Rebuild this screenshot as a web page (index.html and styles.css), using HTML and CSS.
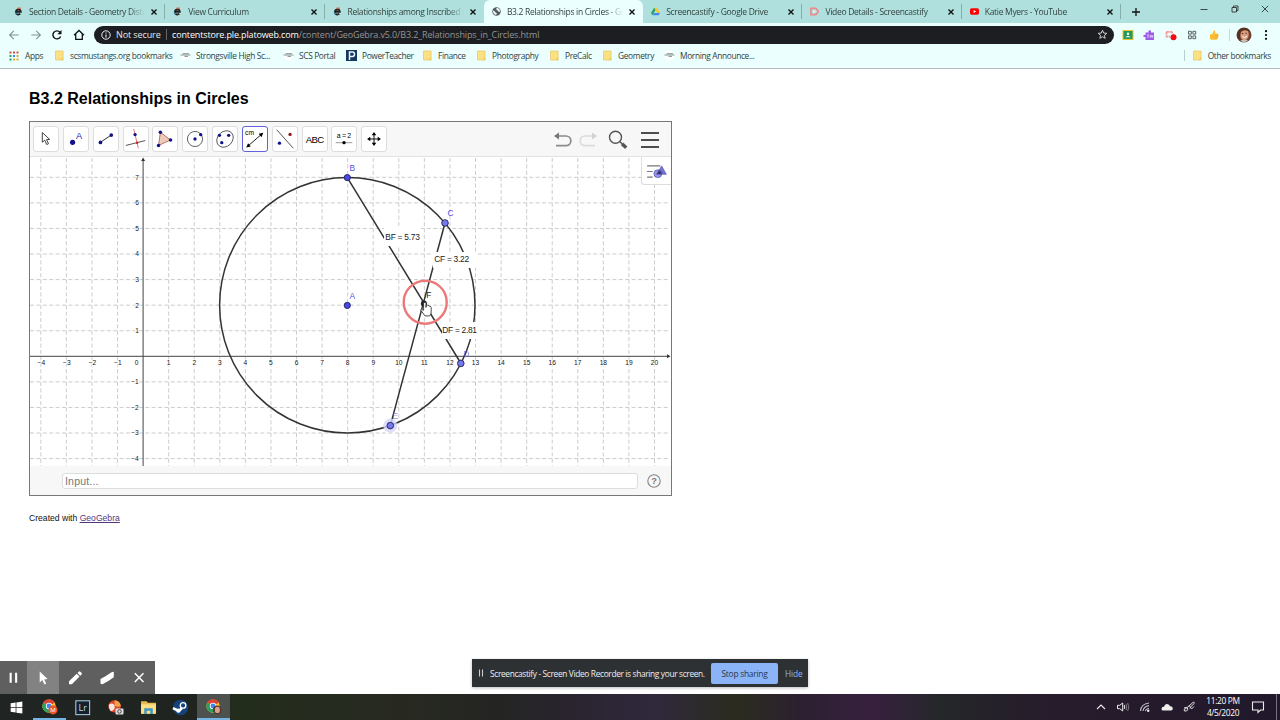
FILE: index.html
```
<!DOCTYPE html>
<html lang="en">

<head>
    <meta charset="UTF-8">
    <meta name="viewport" content="width=device-width, initial-scale=1.0">
    <title>B3.2 Relationships in Circles - GeoGebra</title>
    <link rel="stylesheet" href="styles.css">
</head>

<body>
    <svg class="defs">
        <symbol id="edmentum" viewBox="0 0 10 10">
            <path d="M2.2 5.3 H7.6 A2.8 2.8 0 1 0 6.9 7.4" fill="none" stroke="#222" stroke-width="2" />
            <path d="M4 1.4 H7.5" stroke="#e5593c" stroke-width="1.6" />
            <path d="M1 6.2 l2 1.6" stroke="#3a8fc4" stroke-width="1.4" />
        </symbol>
        <symbol id="close" viewBox="0 0 8 8">
            <path d="M1.5 1.5 L6.5 6.5 M6.5 1.5 L1.5 6.5" stroke="#111" stroke-width="1.4" />
        </symbol>
        <symbol id="folder" viewBox="0 0 10 11">
            <path d="M1 1 H8.6 V10 H1 Z" fill="#fbe184" stroke="#e5c565" stroke-width=".7" />
            <path d="M7.8 7.5 h.9 v2.7 h-2.5 z" fill="#f0cb5c" />
        </symbol>
        <symbol id="mustang" viewBox="0 0 11 11">
            <circle cx="5.5" cy="5.5" r="5" fill="#fff" />
            <path d="M.5 5 H10.5 M2.5 3.7 H9 M4.5 6.4 H8" stroke="#718a83" stroke-width=".9" />
        </symbol>
        <symbol id="chrome" viewBox="0 0 16 16">
            <circle cx="8" cy="8" r="7.5" fill="#fbc72f" />
            <path d="M8 8 L1.5 4.2 A7.5 7.5 0 0 1 14.5 4.2 Z" fill="#db4437" />
            <path d="M8 8 L1.5 4.2 A7.5 7.5 0 0 0 8 15.5 Z" fill="#2da15b" />
            <circle cx="8" cy="8" r="3.6" fill="#fff" />
            <circle cx="8" cy="8" r="2.8" fill="#4285f4" />
        </symbol>
    </svg>

    <div class="tabs">
        <div class="tab"><svg class="fav"><use href="#edmentum" /></svg><span>Section Details - Geometry Dista</span><svg class="x"><use href="#close" /></svg></div>
        <div class="tab"><svg class="fav"><use href="#edmentum" /></svg><span>View Curriculum</span><svg class="x"><use href="#close" /></svg></div>
        <div class="tab before-active"><svg class="fav"><use href="#edmentum" /></svg><span>Relationships among Inscribed A</span><svg class="x"><use href="#close" /></svg></div>
        <div class="tab active">
            <svg class="fav" viewBox="0 0 10 10">
                <circle cx="5" cy="5" r="4.7" fill="#555a5e" />
                <path d="M1 4 Q3 4 4 6 L5.5 7 L4.6 9 Q1 8 1 4 M5 1 Q4 3 6 3.6 L7 5 L9 5.5 Q9 2 6.5 1.2 Z" fill="#e9f7f6" />
            </svg>
            <span>B3.2 Relationships in Circles - Ge</span><svg class="x"><use href="#close" /></svg>
        </div>
        <div class="tab">
            <svg class="fav" viewBox="0 0 10 10">
                <path d="M3.5 .7 L6.5 .7 L10 6.6 H7 Z" fill="#fbc52d" />
                <path d="M3.5 .7 L5 3.3 L1.6 9.3 L0 6.6 Z" fill="#1ea362" />
                <path d="M3.2 6.6 H10 L8.5 9.3 H1.6 Z" fill="#4688f1" />
            </svg>
            <span>Screencastify - Google Drive</span><svg class="x"><use href="#close" /></svg>
        </div>
        <div class="tab">
            <svg class="fav" viewBox="0 0 10 10">
                <path d="M1 1.5 H6.5 L9.5 5 L6.5 8.5 H1 Z" fill="none" stroke="#ee8a8c" stroke-width="1.8" />
                <path d="M3.5 3 L6.7 5 L3.5 7 Z" fill="#ffecec" />
            </svg>
            <span>Video Details - Screencastify</span><svg class="x"><use href="#close" /></svg>
        </div>
        <div class="tab">
            <svg class="fav" viewBox="0 0 10 10">
                <rect x="0" y="1.3" width="10" height="7.2" rx="1.8" fill="#f00" />
                <path d="M4 3.2 L6.8 4.9 L4 6.6 Z" fill="#fff" />
            </svg>
            <span>Katie Myers - YouTube</span><svg class="x"><use href="#close" /></svg>
        </div>
        <svg class="new-tab" viewBox="0 0 10 10"><path d="M5 1 V9 M1 5 H9" stroke="#111" stroke-width="1.3" /></svg>
        <div class="window-buttons">
            <svg viewBox="0 0 8 8"><path d="M.5 4.5 H7.5" stroke="#222" stroke-width=".8" /></svg>
            <svg viewBox="0 0 8 8"><path d="M1 2.5 H5.5 V7 H1 Z M2.5 2.5 V1 H7 V5.5 H5.5" fill="none" stroke="#222" stroke-width=".8" /></svg>
            <svg viewBox="0 0 8 8"><path d="M.8 .8 L7.2 7.2 M7.2 .8 L.8 7.2" stroke="#222" stroke-width=".8" /></svg>
        </div>
    </div>

    <div class="address-row">
        <svg class="nav" viewBox="0 0 12 12"><path d="M10.7 6 H1.7 M5.8 1.8 L1.6 6 L5.8 10.2" fill="none" stroke="#829491" stroke-width="1.1" /></svg>
        <svg class="nav" viewBox="0 0 12 12"><path d="M1.3 6 H10.3 M6.2 1.8 L10.4 6 L6.2 10.2" fill="none" stroke="#829491" stroke-width="1.1" /></svg>
        <svg class="nav" viewBox="0 0 12 12"><path d="M9.6 7.4 A4 4 0 1 1 9 3.3" fill="none" stroke="#111" stroke-width="1.4" /><path d="M10.5 1 V5.2 H6.3 Z" fill="#111" /></svg>
        <svg class="nav" viewBox="0 0 12 12"><path d="M1 6.2 L6 1.5 L11 6.2 M2.7 5.3 V10.4 H9.3 V5.3" fill="none" stroke="#111" stroke-width="1.3" /></svg>
        <div class="address">
            <svg class="info" viewBox="0 0 10 10"><circle cx="5" cy="5" r="4.2" fill="none" stroke="#eee" /><path d="M5 4.4 V7.4 M5 2.5 V3.6" stroke="#eee" stroke-width="1.1" /></svg>
            <span class="secure">Not secure</span>
            <span class="url"><b>contentstore.ple.platoweb.com</b><i>/content/GeoGebra.v5.0/B3.2_Relationships_in_Circles.html</i></span>
            <svg class="star" viewBox="0 0 12 12"><path d="M6 1.3 L7.3 4.4 L10.7 4.7 L8.1 6.9 L8.9 10.2 L6 8.4 L3.1 10.2 L3.9 6.9 L1.3 4.7 L4.7 4.4 Z" fill="none" stroke="#ddd" /></svg>
        </div>
        <div class="extensions">
            <svg viewBox="0 0 12 12"><rect x=".5" y="1" width="11" height="10" fill="#f0bd35" /><rect x="1.5" y="2" width="9" height="8" fill="#239957" /><circle cx="6" cy="4.8" r="1.2" fill="#fff" /><path d="M3.3 8.2 Q6 5.2 8.7 8.2 Z" fill="#fff" /></svg>
            <svg viewBox="0 0 12 12"><path d="M2.5 3.5 H5.5 V1.5 H8 V3.5 H11 V11 H2.5 V8 H.5 V6 H2.5 Z" fill="#9c5ce6" /><path d="M4 6 H6 M5 6 V9 M7 6 L7.6 8.6 L8.5 6.4 L9.4 8.6 L10 6" fill="none" stroke="#e8d8ff" stroke-width=".8" /></svg>
            <svg viewBox="0 0 12 12"><path d="M1.5 2.8 H6.5 L8 5 M1.5 2.8 V7.5 H5" fill="none" stroke="#f29a9c" stroke-width="1.8" stroke-dasharray="3 .6" /><circle cx="8.5" cy="8.3" r="3" fill="#f00b17" /></svg>
            <svg viewBox="0 0 12 12"><path d="M2.5 2.3 H5.3 V5.1 H2.5 Z M6.9 2.3 H9.7 V5.1 H6.9 Z M2.5 6.9 H5.3 V9.7 H2.5 Z M6.9 6.9 H9.7 V9.7 H6.9 Z" fill="none" stroke="#47504f" stroke-width=".9" /></svg>
            <svg viewBox="0 0 12 12"><path d="M2 5.5 L4.3 5 L6 1.2 Q7.8 1 7 4.6 H9.8 Q11 5 10.3 7.5 L9.6 9.7 Q9.3 10.8 7.8 10.8 H3.4 L2 10 Z" fill="#fcbd32" /><path d="M7 6.6 H10.4 M7 8.4 H10" stroke="#e79a24" stroke-width=".5" /></svg>
        </div>
        <svg class="avatar" viewBox="0 0 16 16">
            <circle cx="8" cy="8" r="7.5" fill="#70432f" />
            <ellipse cx="8.4" cy="7.5" rx="4.3" ry="5.5" fill="#d99b7e" />
            <path d="M1 8 Q2 1 8 1 Q13 1 14 5 Q10 2 6 4 Q3.5 6 4.5 13 Q1 12 1 8" fill="#54301f" />
            <path d="M5.8 6.5 h1.5 M9.5 6.3 h1.5" stroke="#4b2a20" stroke-width=".9" />
            <path d="M6.5 9.7 Q8.8 11.6 11 9.2" fill="none" stroke="#fff" stroke-width="1" />
            <path d="M4.5 13.4 Q8 11.8 12 13.2 Q8 17 4.5 13.4" fill="#c9c0ba" />
        </svg>
        <svg class="more" viewBox="0 0 4 12"><circle cx="2" cy="2.2" r="1.1" /><circle cx="2" cy="6" r="1.1" /><circle cx="2" cy="9.8" r="1.1" /></svg>
    </div>

    <div class="bookmarks">
        <svg class="apps" viewBox="0 0 10 10">
            <path d="M.5 1.5 H2.5 M4 1.5 H6 M7.5 1.5 H9.5" stroke="#dc4a3c" stroke-width="2" />
            <path d="M.5 5 H2.5" stroke="#27a05c" stroke-width="2" /><path d="M4 5 H6" stroke="#4285f4" stroke-width="2" /><path d="M7.5 5 H9.5 M7.5 8.5 H9.5 M4 8.5 H6" stroke="#e5aa2c" stroke-width="2" />
            <path d="M.5 8.5 H2.5" stroke="#27a05c" stroke-width="2" />
        </svg><span class="bm-apps">Apps</span>
        <svg class="bm-icon"><use href="#folder" /></svg><span class="bm-scs">scsmustangs.org bookmarks</span>
        <svg class="bm-icon"><use href="#mustang" /></svg><span class="bm-high">Strongsville High Sc...</span>
        <svg class="bm-icon"><use href="#mustang" /></svg><span class="bm-portal">SCS Portal</span>
        <svg class="bm-icon" viewBox="0 0 11 11"><rect width="11" height="11" fill="#15365f" /><path d="M3.5 10 V2 H6.5 Q8.5 2 8.5 4.2 Q8.5 6.4 6.5 6.4 H4" fill="none" stroke="#e9f3fa" stroke-width="1.5" /></svg><span class="bm-power">PowerTeacher</span>
        <svg class="bm-icon"><use href="#folder" /></svg><span class="bm-finance">Finance</span>
        <svg class="bm-icon"><use href="#folder" /></svg><span class="bm-photo">Photography</span>
        <svg class="bm-icon"><use href="#folder" /></svg><span class="bm-pre">PreCalc</span>
        <svg class="bm-icon"><use href="#folder" /></svg><span class="bm-geo">Geometry</span>
        <svg class="bm-icon"><use href="#mustang" /></svg><span>Morning Announce...</span>
        <div class="other"><svg class="bm-icon"><use href="#folder" /></svg><span>Other bookmarks</span></div>
    </div>

    <main class="page">
        <h1>B3.2 Relationships in Circles</h1>

        <div class="applet">
            <div class="toolbar">
                <svg class="tool" viewBox="0 0 26 26"><path d="M9 6 L9 16.5 L11.6 14.3 L13.8 19 L15.7 18.1 L13.6 13.7 L17 13.5 Z" fill="#fff" stroke="#333" /></svg>
                <svg class="tool" viewBox="0 0 26 26"><circle cx="9.3" cy="16.6" r="2.8" fill="#11118a" /><text x="13" y="12.6" font-size="10" fill="#22b">A</text></svg>
                <svg class="tool" viewBox="0 0 26 26"><path d="M7 16.5 L18.7 8.8" stroke="#222" /><circle cx="7" cy="16.7" r="2" fill="#11118a" /><circle cx="18.7" cy="8.8" r="2" fill="#11118a" /></svg>
                <svg class="tool" viewBox="0 0 26 26"><path d="M2 20 L23 14.7" stroke="#333" stroke-width=".9" /><path d="M10.5 2 L15.5 23" stroke="#e25d5d" stroke-width=".9" /><circle cx="12" cy="8.2" r="1.8" fill="#11118a" /><circle cx="14.2" cy="17" r="1.3" fill="#c22" /></svg>
                <svg class="tool" viewBox="0 0 26 26"><path d="M6 20 L8 5.7 L19 14 Z" fill="#edcabb" stroke="#a5624a" stroke-width=".9" /><circle cx="6" cy="20" r="1.9" fill="#11118a" /><circle cx="8" cy="5.7" r="1.9" fill="#11118a" /><circle cx="19" cy="14" r="1.9" fill="#11118a" /></svg>
                <svg class="tool" viewBox="0 0 26 26"><circle cx="13" cy="13" r="8.2" fill="none" stroke="#444" stroke-width=".9" /><circle cx="13" cy="13" r="1.8" fill="#11118a" /><circle cx="19.2" cy="8.3" r="1.8" fill="#11118a" /></svg>
                <svg class="tool" viewBox="0 0 26 26"><ellipse cx="13" cy="13" rx="9.8" ry="8" transform="rotate(-45 13 13)" fill="none" stroke="#444" stroke-width=".9" /><circle cx="7" cy="9" r="1.8" fill="#11118a" /><circle cx="17" cy="9" r="1.8" fill="#11118a" /><circle cx="9.5" cy="17" r="1.8" fill="#11118a" /></svg>
                <svg class="tool selected" viewBox="0 0 26 26"><path d="M5.5 20.5 L20 8" stroke="#111" /><path d="M3.5 22.3 L5.5 17.6 L8.4 21.1 Z M22 6.2 L17 7.4 L20 11 Z" /><text x="2.3" y="9.2" font-size="7.3">cm</text></svg>
                <svg class="tool" viewBox="0 0 26 26"><path d="M4 3 L22 23" stroke="#333" stroke-width=".9" /><circle cx="7" cy="17.5" r="1.8" fill="#11118a" /><circle cx="18.5" cy="8" r="1.8" fill="#8b1717" /></svg>
                <svg class="tool" viewBox="0 0 26 26"><text x="13" y="17.2" text-anchor="middle" font-size="10.4" textLength="20">ABC</text></svg>
                <svg class="tool" viewBox="0 0 26 26"><text x="13" y="12" text-anchor="middle" font-size="7.5" textLength="15.5">a=2</text><path d="M4 17 H22" stroke="#777" stroke-width=".8" /><circle cx="13" cy="17" r="1.8" /></svg>
                <svg class="tool" viewBox="0 0 26 26"><path d="M13 8 V18 M8 13 H18" stroke="#111" stroke-width="1.1" /><path d="M13 5.5 L15.5 9 H10.5 Z M13 20.5 L15.5 17 H10.5 Z M5.5 13 L9 10.5 V15.5 Z M20.5 13 L17 10.5 V15.5 Z" /></svg>
                <div class="actions">
                    <svg viewBox="0 0 20 20"><path d="M5 6 H13 A4.8 4.8 0 0 1 13 15.7 H3" fill="none" stroke="#8a8a8a" stroke-width="1.7" /><path d="M1 6 L6 2.5 V9.5 Z" fill="#777" /></svg>
                    <svg viewBox="0 0 20 20"><path d="M15 6 H7 A4.8 4.8 0 0 0 7 15.7 H17" fill="none" stroke="#dcdcdc" stroke-width="1.7" /><path d="M19 6 L14 2.5 V9.5 Z" fill="#d2d2d2" /></svg>
                    <svg class="search" viewBox="0 0 20 20"><circle cx="7.5" cy="7.3" r="6" fill="none" stroke="#555" stroke-width="1.4" /><path d="M12 11.8 L14 13.8" stroke="#555" stroke-width="1.6" /><path d="M14 13.7 L18.2 17.7" stroke="#555" stroke-width="3.4" /></svg>
                    <svg class="menu" viewBox="0 0 20 20"><path d="M1 3 H19 M1 10 H19 M1 17 H19" stroke="#4d4d4d" stroke-width="1.8" /></svg>
                </div>
            </div>

            <div class="view">
                <svg id="graph" class="graph" viewBox="30 157 641 309">
                    <g id="grid"></g>
                    <path class="axis" d="M30 356.3 H669 M143.1 466 V159" />
                    <path d="M670.5 356.3 l-3.5 -2 v4 z M143.1 157.5 l-2 3.5 h4 z" fill="#333" />
                    <g id="numbers"></g>
                    <circle class="curve" cx="347.3" cy="305.3" r="127.7" />
                    <path class="curve" d="M347.3 177.7 L461 363.5 M445 223 L390.3 425.6" />
                    <path d="M384 228 h37 v18 h-37 z M433 252 h43 v16 h-43 z M442 322 h38 v17 h-38 z" fill="#fff" />
                    <g class="measure">
                        <text x="385.3" y="239.9" textLength="34.5">BF = 5.73</text>
                        <text x="434.3" y="262.4" textLength="34.8">CF = 3.22</text>
                        <text x="442.3" y="332.5" textLength="34.7">DF = 2.81</text>
                        <text x="426.3" y="297.5">F</text>
                    </g>
                    <circle cx="390.3" cy="425.6" r="7" fill="#d5d5fb" opacity=".8" />
                    <g class="labels">
                        <text x="349.5" y="171.3">B</text>
                        <text x="349.5" y="299.3">A</text>
                        <text x="447.5" y="215.6">C</text>
                        <text x="463.3" y="357" class="faint">D</text>
                        <text x="392.5" y="418.9" class="faint">E</text>
                    </g>
                    <circle class="point" cx="347.3" cy="177.6" r="3.1" />
                    <circle class="point" cx="347.3" cy="305.4" r="3.1" />
                    <circle class="point on-curve" cx="445" cy="223" r="3.3" />
                    <circle class="point on-curve" cx="460.8" cy="363.4" r="3.3" />
                    <circle class="point on-curve" cx="390.3" cy="425.6" r="3.3" />
                    <circle cx="425.2" cy="302.2" r="21.5" fill="none" stroke="#eb7979" stroke-width="2.4" />
                    <circle cx="423.9" cy="303.5" r="3" fill="#222" />
                    <path d="M423.6 302.6 q1.6 -1 2.4 .8 v4 l.2 -2.4 q1.4 -.5 1.7 .6 q1.3 -.4 1.5 .7 q1.8 -.2 1.8 1.2 v4.4 q0 2.4 -1.6 4 h-4.6 l-4.4 -6 q.3 -1.4 3 .4 z" fill="#fff" stroke="#222" stroke-width=".8" />
                </svg>
                <div class="style-bar">
                    <svg viewBox="0 0 22 16"><path d="M1 2 H15 M1 8 H7 M1 14 H7" stroke="#777" stroke-width="1.3" /><path d="M11 11 L16.5 2 L21.5 11 Z" fill="#7474cf" stroke="#5858b0" stroke-width=".7" /><circle cx="12.4" cy="10.3" r="4.2" fill="#7b7be0" fill-opacity=".8" stroke="#4d4da8" stroke-width=".7" /><path d="M11 11 L13.6 6.6 Q17 8.5 16.4 11 Z" fill="#343477" /></svg>
                </div>
            </div>

            <div class="input-bar">
                <div class="input">Input...</div>
                <svg class="help" viewBox="0 0 14 14"><circle cx="7" cy="7" r="6.2" fill="none" stroke="#858585" stroke-width="1.1" /><text x="7" y="10.3" text-anchor="middle" font-size="9.3" font-weight="bold" fill="#777">?</text></svg>
            </div>
        </div>

        <p class="credit">Created with <a href="#">GeoGebra</a></p>
    </main>

    <div class="draw-tools">
        <svg viewBox="0 0 20 20"><path d="M7.3 5.5 V15 M12.5 5.5 V15" stroke="#fff" stroke-width="2" /></svg>
        <svg class="picked" viewBox="0 0 20 20"><path d="M6.7 4 V15 L9.3 12.5 L11.4 17 L13.2 16.1 L11.2 11.9 L14.6 11.6 Z" fill="#fff" /></svg>
        <svg viewBox="0 0 20 20"><path d="M4 16.8 V13.8 L11.7 6.3 L14.5 9 L6.9 16.8 Z M12.5 5.5 L14 4 Q14.7 3.6 15.3 4.2 L16.7 5.6 Q17.2 6.2 16.6 6.9 L15.2 8.2 Z" fill="#fff" /></svg>
        <svg viewBox="0 0 20 20"><path d="M3.5 11.5 Q10 8 14.5 4.7 L16.8 4.3 V9.7 Q11 14 5.5 16.8 L3.5 16.3 Z" fill="#fff" /></svg>
        <svg viewBox="0 0 20 20"><path d="M5.8 5.8 L14.5 14.5 M14.5 5.8 L5.8 14.5" stroke="#fff" stroke-width="1.5" /></svg>
    </div>

    <div class="sharing">
        <svg viewBox="0 0 6 8"><path d="M1.5 .5 V7.5 M4.5 .5 V7.5" stroke="#ccc" stroke-width="1.1" /></svg>
        <span class="message">Screencastify - Screen Video Recorder is sharing your screen.</span>
        <button>Stop sharing</button>
        <span class="hide">Hide</span>
    </div>

    <footer class="taskbar">
        <div class="task"><svg viewBox="0 0 16 16"><path d="M2.5 4 L7.2 3.3 V7.7 H2.5 Z M7.9 3.2 L13.5 2.4 V7.7 H7.9 Z M2.5 8.4 H7.2 V12.8 L2.5 12.1 Z M7.9 8.4 H13.5 V13.7 L7.9 12.9 Z" fill="#fff" /></svg></div>
        <div class="task open"><svg viewBox="0 0 18 18"><use href="#chrome" x="1" y="1" width="15" height="15" /><circle cx="12.7" cy="12.6" r="4.8" fill="#ed5724" /><text x="12.7" y="15" text-anchor="middle" font-size="6.5" fill="#fff">M</text></svg></div>
        <div class="task"><svg viewBox="0 0 16 16"><rect x="1.7" y="1.7" width="13" height="13" fill="#14212c" stroke="#a8cce0" stroke-width="1" /><text x="8.2" y="11.4" text-anchor="middle" font-size="8.5" fill="#bddcec">Lr</text></svg></div>
        <div class="task"><svg viewBox="0 0 18 18"><circle cx="8" cy="7.8" r="6.6" fill="#e04628" /><path d="M8 1.2 A6.6 6.6 0 0 1 14.6 7.8 Q11 9 8 7 Z" fill="#f3a14c" /><path d="M2 6 Q6 3 8 7 Q9 12 4 13 Q1.5 10 2 6" fill="#f5e8e1" /><rect x="9" y="10" width="8.5" height="6.3" rx="1" fill="#ddd" /><circle cx="13.2" cy="13.2" r="1.9" fill="#ddd" stroke="#333" stroke-width=".9" /></svg></div>
        <div class="task"><svg viewBox="0 0 16 16"><path d="M1 2 H6 L7.5 3.5 H15 V14 H1 Z" fill="#e9ba4f" /><path d="M1 5 H15 V13.5 H1 Z" fill="#fcdf83" /><path d="M4 14.2 V8.6 H12 V14.2 H9.7 V11 H6.3 V14.2 Z" fill="#3b97c6" /></svg></div>
        <div class="task"><svg viewBox="0 0 16 16"><circle cx="8" cy="8" r="7.2" fill="#14427c" /><path d="M.9 8.5 L6.5 11.3 L9.5 8.5" stroke="#fff" stroke-width="2.4" fill="none" /><circle cx="10.4" cy="6" r="2.6" fill="#14427c" stroke="#fff" stroke-width="1.3" /><circle cx="6" cy="11" r="2" fill="#fff" /></svg></div>
        <div class="task open current"><svg viewBox="0 0 18 18"><use href="#chrome" x="1" y="1" width="15" height="15" /><circle cx="12.9" cy="12.6" r="4.6" fill="#54352b" /><ellipse cx="13.1" cy="12.6" rx="2.7" ry="3.4" fill="#d9a28c" /></svg></div>
        <div class="tray">
            <svg viewBox="0 0 14 14"><path d="M3 9 L7 5 L11 9" fill="none" stroke="#eee" stroke-width="1.1" /></svg>
            <svg viewBox="0 0 14 14"><path d="M1.5 5.3 H3.7 L6.7 3 V11 L3.7 8.7 H1.5 Z" fill="none" stroke="#eee" /><path d="M8.2 5 Q9.3 7 8.2 9" fill="none" stroke="#eee" /><path d="M10 4 Q11.5 7 10 10 M11.7 3 Q13.8 7 11.7 11" fill="none" stroke="#7c7785" /></svg>
            <svg viewBox="0 0 14 14"><path d="M2.5 11 Q3 4 11 3 M5 11 Q5.5 6.5 11 5.6 M7.3 11 Q8 8.8 11 8.2" fill="none" stroke="#c5c1c9" stroke-width="1.1" /><circle cx="10.2" cy="10.8" r="1.2" fill="#eee" /></svg>
            <svg viewBox="0 0 14 14"><path d="M1.5 9 Q1.5 6.5 4 6.7 Q5 3.3 8 4.3 Q9.6 4.8 9.9 6.3 Q12.7 6 12.8 8.6 Q12.8 10.6 11 10.6 H3.2 Q1.5 10.5 1.5 9" fill="#eee" /></svg>
            <svg viewBox="0 0 14 14"><path d="M2 8 Q5 6 6 9 Q5 12 2.5 11 Q1 9 4 8.5 L11.5 2 L12.5 3.2 L7.5 8 M7 5 L9.5 9 L12 6.5" fill="none" stroke="#ddd" stroke-width="1" /></svg>
        </div>
        <div class="clock"><span>11:20 PM</span><span>4/5/2020</span></div>
        <svg class="notify" viewBox="0 0 14 14"><path d="M1.5 2 H12.5 V10 H9.5 L7 12.5 V10 H1.5 Z" fill="none" stroke="#eee" stroke-width="1.1" /></svg>
        <div class="show-desktop"></div>
    </footer>

    <script>
        const unit = 25.57;
        const originX = 143.1;
        const originY = 356.3;
        let lines = '';
        let numbers = '';

        for (let i = -4; i <= 20; i++) {
            const x = originX + i * unit;
            if (i !== 0) lines += `<path d="M${x} 158 V466" />`;
            const left = i < 0 ? x + 0.5 : i === 0 ? x - 6.5 : x;
            numbers += `<text x="${left}" y="365">${String(i).replace('-', '−')}</text>`;
        }

        for (let j = -4; j <= 7; j++) {
            if (j === 0) continue;
            const y = originY - j * unit;
            lines += `<path d="M30 ${y} H670" />`;
            numbers += `<text class="side" x="138.8" y="${y + 2.4}">${String(j).replace('-', '−')}</text>`;
        }

        document.getElementById('grid').innerHTML = lines;
        document.getElementById('numbers').innerHTML = numbers;
    </script>
</body>

</html>
```
FILE: styles.css
```
* {
    box-sizing: border-box;
}

body {
    margin: 0;
    width: 1280px;
    height: 720px;
    position: relative;
    overflow: hidden;
    background-color: #fff;
    font-family: "Open Sans", "Noto Sans", sans-serif;
    font-size: 9px;
    color: #33413f;
}

svg {
    display: block;
    flex: none;
}

.defs {
    position: absolute;
    width: 0;
    height: 0;
}

/* browser */
.tabs {
    display: flex;
    height: 23px;
    padding-left: 6px;
    background-color: #afe0dd;
}

.tab {
    display: flex;
    align-items: center;
    width: 159.3px;
    height: 23px;
    padding: 0 6px 0 8px;
    border-right: 1px solid #86aeab;
    border-image: linear-gradient(transparent 22%, #86aeab 22%, #86aeab 78%, transparent 78%) 1;
}

.tab.before-active,
.tab.active {
    border-color: transparent;
    border-image: none;
}

.tab.active {
    background-color: #eafffe;
    border-radius: 6px 6px 0 0;
}

.tab span {
    flex: 1;
    margin-left: 6px;
    overflow: hidden;
    white-space: nowrap;
    font-size: 8.5px;
    letter-spacing: -0.3px;
    -webkit-mask-image: linear-gradient(90deg, #000 calc(100% - 16px), transparent);
}

.fav {
    width: 9px;
    height: 9px;
}

.x {
    width: 8px;
    height: 8px;
    margin-left: 5px;
}

.new-tab {
    width: 10px;
    height: 10px;
    margin: 7px 0 0 10px;
}

.window-buttons {
    display: flex;
    gap: 22.5px;
    margin: 5px 11px 0 auto;
}

.window-buttons svg {
    width: 8px;
    height: 8px;
}

.address-row {
    display: flex;
    align-items: center;
    height: 23px;
    padding-left: 8px;
    background-color: #eafffe;
}

.nav {
    width: 12px;
    height: 12px;
    margin-right: 9.5px;
}

.address {
    display: flex;
    align-items: center;
    width: 1020px;
    height: 18px;
    padding: 0 6px 0 7px;
    border-radius: 9px;
    background-color: #1d1e21;
    color: #e6e6e6;
}

.info {
    width: 10px;
    height: 10px;
}

.secure {
    width: 51px;
    margin-left: 5px;
    border-right: 1px solid #666;
    line-height: 11px;
    white-space: nowrap;
    letter-spacing: -0.1px;
}

.url {
    margin-left: 5px;
    white-space: nowrap;
}

.url b {
    font-weight: normal;
    color: #fff;
    letter-spacing: -0.14px;
}

.url i {
    font-style: normal;
    color: #929496;
    letter-spacing: -0.13px;
}

.star {
    width: 11px;
    height: 11px;
    margin-left: auto;
}

.extensions {
    display: flex;
    gap: 9.4px;
    margin-left: 8px;
    padding-right: 9px;
    border-right: 1px solid #c2dedc;
}

.extensions svg {
    width: 12px;
    height: 12px;
}

.avatar {
    width: 16px;
    height: 16px;
    margin-left: 6px;
}

.more {
    width: 4px;
    height: 12px;
    margin-left: 12px;
}

.bookmarks {
    display: flex;
    align-items: center;
    height: 23px;
    padding: 0 9px 3px;
    border-bottom: 1px solid #b5bbbb;
    background-color: #eafffe;
    white-space: nowrap;
    font-size: 8.4px;
    letter-spacing: -0.36px;
}

.bookmarks > span {
    flex: none;
}

.apps {
    width: 10px;
    height: 10px;
    margin-right: 6px;
}

.bm-icon {
    width: 11px;
    height: 11px;
    margin-right: 5px;
}

.bm-apps { width: 29px; }
.bm-scs { width: 110px; }
.bm-high { width: 87px; }
.bm-portal { width: 47px; }
.bm-power { width: 60px; }
.bm-finance { width: 38px; }
.bm-photo { width: 57px; }
.bm-pre { width: 37px; }
.bm-geo { width: 46px; }

.other {
    display: flex;
    align-items: center;
    margin-left: auto;
    padding-left: 7px;
    border-left: 1px solid #b9cecc;
}

/* content */
.page {
    padding: 20px 0 0 29px;
    font-family: "Liberation Sans", Arial, sans-serif;
    color: #111;
}

h1 {
    margin: 0 0 12px;
    font-size: 16px;
    line-height: 20px;
    color: #000;
}

.applet {
    width: 643px;
    height: 375px;
    border: 1px solid #777;
}

.toolbar {
    display: flex;
    align-items: center;
    gap: 3.85px;
    height: 35px;
    padding-left: 3px;
    border-bottom: 1px solid #e2e2e2;
    background-color: #f7f7f7;
}

.tool {
    width: 26px;
    height: 26px;
    border: 1px solid #ddd;
    border-radius: 3px;
    background-color: #fff;
}

.tool.selected {
    border: 1.5px solid #6161d8;
}

.actions {
    display: flex;
    align-items: center;
    margin-left: auto;
    padding: 2px 11px 0 0;
}

.actions svg {
    width: 20px;
    height: 20px;
    margin-right: 4.5px;
}

.actions .search {
    margin: 0 12px 0 6px;
}

.actions .menu {
    margin-right: 0;
}

.view {
    position: relative;
    height: 309px;
}

.graph {
    width: 641px;
    height: 309px;
}

#grid path {
    stroke: #c6c6c6;
    stroke-width: 0.9;
    stroke-dasharray: 4 2.4;
}

#numbers text {
    font-size: 6.6px;
    text-anchor: middle;
    fill: #111;
    stroke: #fff;
    stroke-width: 1.5px;
    paint-order: stroke;
}

#numbers .side {
    text-anchor: end;
}

.axis {
    fill: none;
    stroke: #444;
    stroke-width: 1;
}

.curve {
    fill: none;
    stroke: #333;
    stroke-width: 1.5;
}

.measure {
    font-size: 8.4px;
    fill: #222;
}

.labels {
    font-size: 8.4px;
    fill: #5252dc;
}

.faint {
    opacity: 0.65;
}

.point {
    fill: #4747ed;
    stroke: #20204e;
    stroke-width: 0.9;
}

.on-curve {
    fill: #7777ef;
}

/* lies over the top right corner of the graph */
.style-bar {
    position: absolute;
    top: 0;
    right: 0;
    width: 30px;
    height: 28px;
    padding: 7px 0 0 4px;
    border: 1px solid #ddd;
    border-width: 0 0 1px 1px;
    border-radius: 0 0 0 3px;
    background-color: #fff;
}

.style-bar svg {
    width: 21px;
    height: 15px;
}

.input-bar {
    display: flex;
    align-items: center;
    height: 29px;
    padding-left: 32px;
    background-color: #f7f7f7;
}

.input {
    width: 576px;
    height: 16px;
    padding-left: 2px;
    border: 1px solid #ddd;
    border-radius: 3px;
    background-color: #fff;
    font-size: 10.6px;
    line-height: 14px;
    letter-spacing: 0.15px;
    color: #777;
}

.help {
    width: 14px;
    height: 14px;
    margin-left: 9px;
}

.credit {
    margin: 16px 0 0;
    font-size: 8.6px;
    line-height: 12px;
}

.credit a {
    color: #54357d;
}

/* overlays of the screen recorder */
.draw-tools {
    position: absolute;
    left: 0;
    top: 661px;
    display: flex;
    width: 155px;
    height: 33px;
    background-color: #5f5f5f;
}

.draw-tools svg {
    width: 32px;
    height: 33px;
    padding: 6px;
}

.draw-tools svg:first-child {
    width: 27px;
    padding: 6px 3px;
}

.draw-tools .picked {
    background-color: #828282;
}

.sharing {
    position: absolute;
    left: 472px;
    top: 659px;
    display: flex;
    align-items: center;
    width: 336px;
    height: 28px;
    padding-left: 6px;
    background-color: #2e3134;
    box-shadow: 0 1px 3px #bbb;
    font-size: 8.4px;
    letter-spacing: -0.36px;
    color: #eee;
}

.sharing svg {
    width: 6px;
    height: 8px;
}

.message {
    flex: none;
    width: 216px;
    margin-left: 6px;
    white-space: nowrap;
}

.sharing button {
    width: 67px;
    height: 21px;
    margin-left: 5px;
    padding: 0;
    border: none;
    border-radius: 2px;
    background-color: #8bb4f8;
    font: inherit;
    letter-spacing: -0.25px;
    color: #26364e;
}

.hide {
    margin-left: 7px;
    letter-spacing: -0.1px;
    color: #8bb4f8;
}

/* taskbar */
.taskbar {
    position: absolute;
    left: 0;
    top: 694px;
    display: flex;
    align-items: center;
    width: 1280px;
    height: 26px;
    background: linear-gradient(90deg, #202423 0, #1f2420 200px, #232d1c 240px, #272921 400px, #242523 500px, #29242f 570px, #30283c 655px, #2b2c1f 735px, #2c2030 800px, #37203f 871px, #242729 942px, #271c2b 1050px, #21182c 1280px);
}

.task {
    display: flex;
    align-items: center;
    justify-content: center;
    width: 32.9px;
    height: 26px;
}

.task svg {
    width: 17px;
    height: 17px;
}

.task.open {
    border-bottom: 2px solid #75b5e5;
}

.task.current {
    background-color: #4d524f;
}

.tray {
    display: flex;
    gap: 8px;
    margin-left: auto;
}

.tray svg {
    width: 14px;
    height: 14px;
}

.clock {
    display: flex;
    flex-direction: column;
    align-items: center;
    width: 34px;
    margin-left: 10px;
    font-size: 8.4px;
    line-height: 12px;
    letter-spacing: -0.34px;
    white-space: nowrap;
    color: #fff;
}

.notify {
    width: 14px;
    height: 14px;
    margin-left: 11px;
}

.show-desktop {
    width: 4px;
    height: 26px;
    margin-left: 11px;
    border-left: 1px solid #77717d;
}
```
